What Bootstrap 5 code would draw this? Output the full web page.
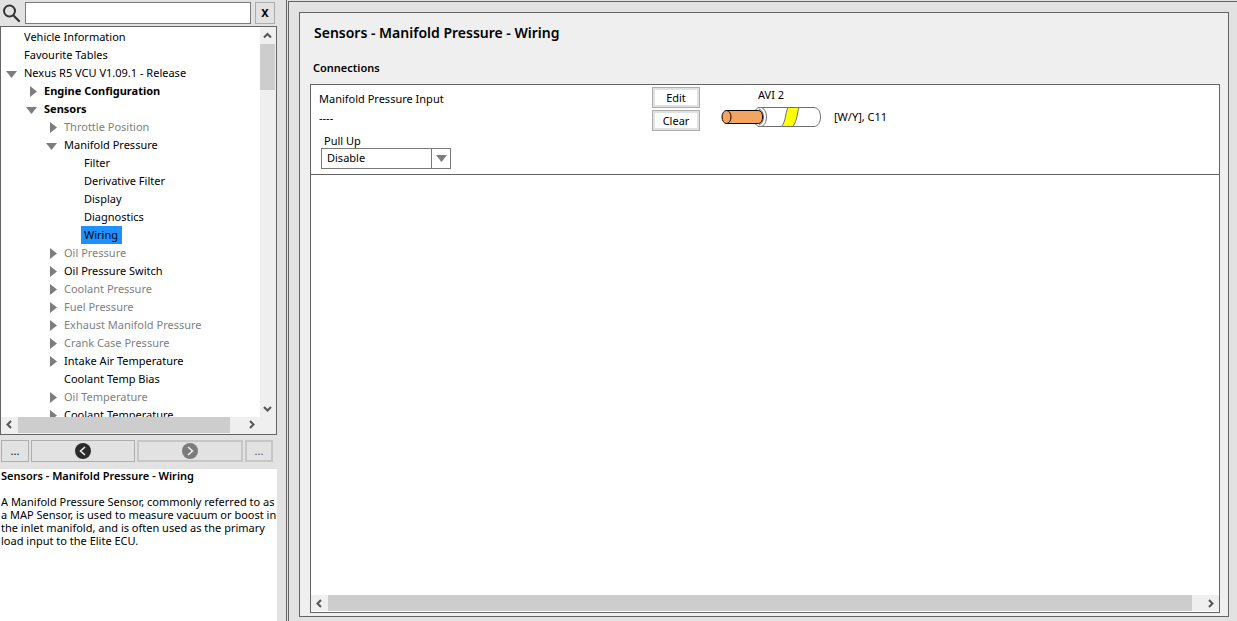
<!DOCTYPE html>
<html lang="en">
<head>
<meta charset="utf-8">
<meta name="viewport" content="width=device-width, initial-scale=1">
<title>Sensors - Manifold Pressure - Wiring</title>
<link href="https://cdn.jsdelivr.net/npm/bootstrap@5.3.0/dist/css/bootstrap.min.css" rel="stylesheet">
<style>
  :root { --line: #646464; --face: #e2e2e2; --panel: #efefef; --thumb: #cdcdcd; }
  body { font: 11px/18px "Noto Sans", "Open Sans", sans-serif; color: #000; background: var(--face); }
  button, input, select { font: inherit; color: inherit; border-radius: 0; }
  svg { display: block; flex: none; }
  .face-btn { background: var(--face); border: 1px solid #adadad; padding: 0; }
  .face-btn:disabled { border: 2px solid #c6c6c6; color: #555; }

  /* sidebar */
  .sidebar { width: 277px; }
  .search-row { height: 26px; padding: 1px 2px 2px 2px; }
  .search-row input { border: 1px solid #7a7a7a; height: 22px; min-width: 0; background: #fff; }
  .search-row .face-btn { width: 20px; height: 22px; line-height: 18px; }
  .tree-box { flex: 8 1 0; min-height: 0; border: 1px solid var(--line); background: #fff; }
  .tree-view { padding-top: 1px; }
  .tree-view ul { margin: 0; padding: 0; list-style: none; }
  .tree-view ul ul { padding-left: 20px; }
  .node { display: flex; height: 18px; white-space: nowrap; }
  .node .twist { width: 20px; padding: 0 4px 0 0; border: 0; background: none; display: flex; justify-content: flex-end; align-items: center; }
  .node a { color: inherit; text-decoration: none; padding: 0 4px 0 3px; line-height: 17px; }
  .node .dim { color: #808080; }
  .node .picked { background: #1e90ff; }
  .help-pane { flex: 3 1 0; min-height: 0; background: #fff; padding: 0 0 0 1px; line-height: 13px; }
  .help-pane h2 { font-size: 11px; line-height: 13px; font-weight: 600; margin: 0 0 13px; }
  .nav-row { padding: 5px 4px 7px 1px; gap: 2px; }
  .nav-row .face-btn { height: 22px; display: flex; align-items: center; justify-content: center; }
  .nav-row .narrow { width: 28px; }

  /* scroll bars */
  .sbar { background: var(--panel); display: flex; flex: none; }
  .sbar button { border: 0; padding: 0; background: none; display: flex; align-items: center; justify-content: center; flex: none; width: 17px; height: 17px; }
  .sbar.vert { flex-direction: column; width: 16px; }
  .sbar.vert button { width: 15px; }
  .sbar.horz { height: 16px; align-items: center; margin-bottom: 1px; }
  .thumb { background: var(--thumb); align-self: stretch; }
  .vert .thumb { margin-right: 1px; }
  .foot { background: var(--panel); }

  /* work area */
  .work { margin-left: 9px; border-left: 1px solid var(--line); }
  .work-inner { margin: 1px 0 0 1px; border: solid var(--line); border-width: 1px 0 0 1px; padding: 10px 8px 4px 10px; }
  .sheet { background: var(--panel); border: 1px solid var(--line); padding: 10px 8px 3px 10px; }
  .sheet h1 { font-size: 14px; line-height: 20px; font-weight: 600; margin: 0 0 16px 4px; }
  .sheet h2 { font-size: 11px; line-height: 18px; font-weight: 600; margin: 0 0 7px 3px; }
  .conn { background: #fff; border: 1px solid var(--line); }
  .conn-item { border-bottom: 1px solid var(--line); padding: 2px 8px 5px; }
  .conn-name { width: 333px; }
  .conn-name p { margin: 0; line-height: 20px; padding-top: 2px; }
  .conn-name p + p { padding: 0; line-height: 18px; }
  .conn-name label { display: block; line-height: 14px; margin: 7px 0 0 5px; }
  .pick { width: 130px; margin-left: 2px; }
  .pick select { width: 100%; height: 21px; border: 1px solid #7a7a7a; background: #fff; appearance: none; padding: 0 24px 1px 5px; line-height: 18px; }
  .pick .drop { position: absolute; right: 1px; top: 1px; bottom: 1px; width: 19px; border-left: 1px solid #7a7a7a; pointer-events: none; display: flex; align-items: center; justify-content: center; }
  .ops { gap: 2px; width: 48px; }
  .ops button { height: 21px; background: #fff; border: 1px solid #adadad; box-shadow: inset 0 0 0 2px #e1e1e1; padding: 0; line-height: 17px; }
  .wire { margin-left: 21px; gap: 12px; }
  .wire figure { margin: 0; }
  .wire figcaption { line-height: 16px; padding: 0 0 3px 37px; }
  .wire-code { padding-top: 21px; }
</style>
<script src="https://cdn.jsdelivr.net/npm/bootstrap@5.3.0/dist/js/bootstrap.bundle.min.js"></script>
</head>
<body class="vh-100 d-flex overflow-hidden">
<svg width="0" height="0" class="position-absolute" aria-hidden="true">
  <symbol id="left" viewBox="0 0 9 9"><path d="M6 1 2.500 4.500 6 8" fill="none" stroke="#555" stroke-width="2"/></symbol>
  <symbol id="right" viewBox="0 0 9 9"><path d="M3 1 6.500 4.500 3 8" fill="none" stroke="#555" stroke-width="2"/></symbol>
  <symbol id="up" viewBox="0 0 9 9"><path d="M1 6.500 4.500 3 8 6.500" fill="none" stroke="#555" stroke-width="2"/></symbol>
  <symbol id="down" viewBox="0 0 9 9"><path d="M1 3 4.500 6.500 8 3" fill="none" stroke="#555" stroke-width="2"/></symbol>
  <symbol id="shut" viewBox="0 0 11 11"><path d="M4 0 11 5.500 4 11z" fill="#7d7d7d"/></symbol>
  <symbol id="open" viewBox="0 0 11 11"><path d="M0 3H11L5.500 10z" fill="#7d7d7d"/></symbol>
</svg>

<aside class="sidebar d-flex flex-column flex-shrink-0">
  <form class="search-row d-flex align-items-center" role="search">
    <svg width="19" height="20" viewBox="0 0 19 20" aria-hidden="true"><circle cx="7.500" cy="8" r="5.500" fill="none" stroke="#333" stroke-width="2"/><path d="M11.500 12.500 17 18" stroke="#333" stroke-width="2.200" stroke-linecap="round"/></svg>
    <input type="text" class="flex-grow-1 ms-1 me-1" aria-label="Search">
    <button type="reset" class="face-btn fw-bold">X</button>
  </form>

  <nav class="tree-box d-flex flex-column" aria-label="Tables">
    <div class="d-flex flex-grow-1 overflow-hidden">
      <div class="tree-view flex-grow-1 overflow-hidden" id="tree"></div>
      <div class="sbar vert">
        <button type="button" aria-label="Scroll up"><svg width="9" height="9"><use href="#up"/></svg></button>
        <div class="thumb" style="height:46px"></div>
        <button type="button" class="mt-auto" aria-label="Scroll down"><svg width="9" height="9"><use href="#down"/></svg></button>
      </div>
    </div>
    <div class="foot"><div class="sbar horz me-3">
      <button type="button" aria-label="Scroll left"><svg width="9" height="9"><use href="#left"/></svg></button>
      <div class="thumb" style="width:212px"></div>
      <button type="button" class="ms-auto" aria-label="Scroll right"><svg width="9" height="9"><use href="#right"/></svg></button>
    </div></div>
  </nav>

  <div class="nav-row d-flex">
    <button type="button" class="face-btn narrow">...</button>
    <button type="button" class="face-btn flex-fill" aria-label="Back"><svg width="16" height="16" viewBox="0 0 16 16"><circle cx="8" cy="8" r="8" fill="#2b2b2b"/><path d="M10 4 5.500 8 10 12" fill="none" stroke="#eee" stroke-width="1.600"/></svg></button>
    <button type="button" class="face-btn flex-fill" aria-label="Forward" disabled><svg width="16" height="16" viewBox="0 0 16 16"><circle cx="8" cy="8" r="8" fill="#7b7b7b"/><path d="M6 4 10.500 8 6 12" fill="none" stroke="#eee" stroke-width="1.600"/></svg></button>
    <button type="button" class="face-btn narrow" disabled>...</button>
  </div>

  <section class="help-pane overflow-hidden">
    <h2>Sensors - Manifold Pressure - Wiring</h2>
    <p class="m-0">A Manifold Pressure Sensor, commonly referred to as a MAP Sensor, is used to measure vacuum or boost in the inlet manifold, and is often used as the primary load input to the Elite ECU.</p>
  </section>
</aside>

<main class="work flex-grow-1 d-flex">
  <div class="work-inner flex-grow-1 d-flex">
    <div class="sheet flex-grow-1 d-flex flex-column">
      <h1>Sensors - Manifold Pressure - Wiring</h1>
      <h2>Connections</h2>
      <div class="conn flex-grow-1 d-flex flex-column">
        <div class="conn-item d-flex align-items-start">
          <div class="conn-name">
            <p>Manifold Pressure Input</p>
            <p>----</p>
            <label for="pull">Pull Up</label>
            <div class="pick position-relative">
              <select id="pull"><option>Disable</option><option>Enable</option></select>
              <span class="drop"><svg width="11" height="8" viewBox="0 0 11 8"><path d="M0 0H11L5.500 7z" fill="#7d7d7d"/></svg></span>
            </div>
          </div>
          <div class="ops d-flex flex-column">
            <button type="button">Edit</button>
            <button type="button">Clear</button>
          </div>
          <div class="wire d-flex">
            <figure>
              <figcaption>AVI 2</figcaption>
              <svg width="101" height="22" viewBox="0 0 101 22" role="img" aria-label="White wire with a yellow stripe">
                <path d="M37 1.500H93C97 1.500 99.500 6 99.500 11S97 20.500 93 20.500H37" fill="#fff" stroke="#6e6e6e"/>
                <path d="M34.500 4C36 2 37.500 1.500 39.500 1.500C43 1.500 45.500 6 45.500 11S43 20.500 39.500 20.500C37.500 20.500 36 20 34.500 18" fill="#fff" stroke="#6e6e6e"/>
                <path d="M67 1.500H78C76 7 76.500 14 72 20.500H60.500C65 15 64 8 67 1.500z" fill="#ff0" stroke="#6e6e6e"/>
                <path d="M38 3C44 5 44 17 38 19" fill="none" stroke="#6e6e6e"/>
                <path d="M5.500 4.500H37.500C43 4.500 43 17.500 37.500 17.500H5.500z" fill="#f4a460" stroke="#000"/>
                <ellipse cx="5.500" cy="11" rx="4.500" ry="6.500" fill="#f4a460" stroke="#000"/>
              </svg>
            </figure>
            <span class="wire-code">[W/Y], C11</span>
          </div>
        </div>
        <div class="sbar horz mt-auto">
          <button type="button" aria-label="Scroll left"><svg width="9" height="9"><use href="#left"/></svg></button>
          <div class="thumb" style="width:95.1%"></div>
          <button type="button" class="ms-auto" aria-label="Scroll right"><svg width="9" height="9"><use href="#right"/></svg></button>
        </div>
      </div>
    </div>
  </div>
</main>

<script>
  // each node: [label, classes, state ('open' | 'shut' | ''), children]
  const nodes = [
    ['Vehicle Information', '', ''],
    ['Favourite Tables', '', ''],
    ['Nexus R5 VCU V1.09.1 - Release', '', 'open', [
      ['Engine Configuration', 'fw-bold', 'shut'],
      ['Sensors', 'fw-bold', 'open', [
        ['Throttle Position', 'dim', 'shut'],
        ['Manifold Pressure', '', 'open', [
          ['Filter', '', ''],
          ['Derivative Filter', '', ''],
          ['Display', '', ''],
          ['Diagnostics', '', ''],
          ['Wiring', 'picked', '']
        ]],
        ['Oil Pressure', 'dim', 'shut'],
        ['Oil Pressure Switch', '', 'shut'],
        ['Coolant Pressure', 'dim', 'shut'],
        ['Fuel Pressure', 'dim', 'shut'],
        ['Exhaust Manifold Pressure', 'dim', 'shut'],
        ['Crank Case Pressure', 'dim', 'shut'],
        ['Intake Air Temperature', '', 'shut'],
        ['Coolant Temp Bias', '', ''],
        ['Oil Temperature', 'dim', 'shut'],
        ['Coolant Temperature', '', 'shut']
      ]]
    ]]
  ];
  const render = list => '<ul>' + list.map(([label, cls, state, kids]) => {
    const twist = state
      ? `<button type="button" class="twist" aria-label="Toggle ${label}"><svg width="11" height="11"><use href="#${state}"/></svg></button>`
      : '<span class="twist"></span>';
    return `<li><div class="node">${twist}<a href="#" class="${cls}">${label}</a></div>${kids ? render(kids) : ''}</li>`;
  }).join('') + '</ul>';
  document.getElementById('tree').innerHTML = render(nodes);
</script>
</body>
</html>
